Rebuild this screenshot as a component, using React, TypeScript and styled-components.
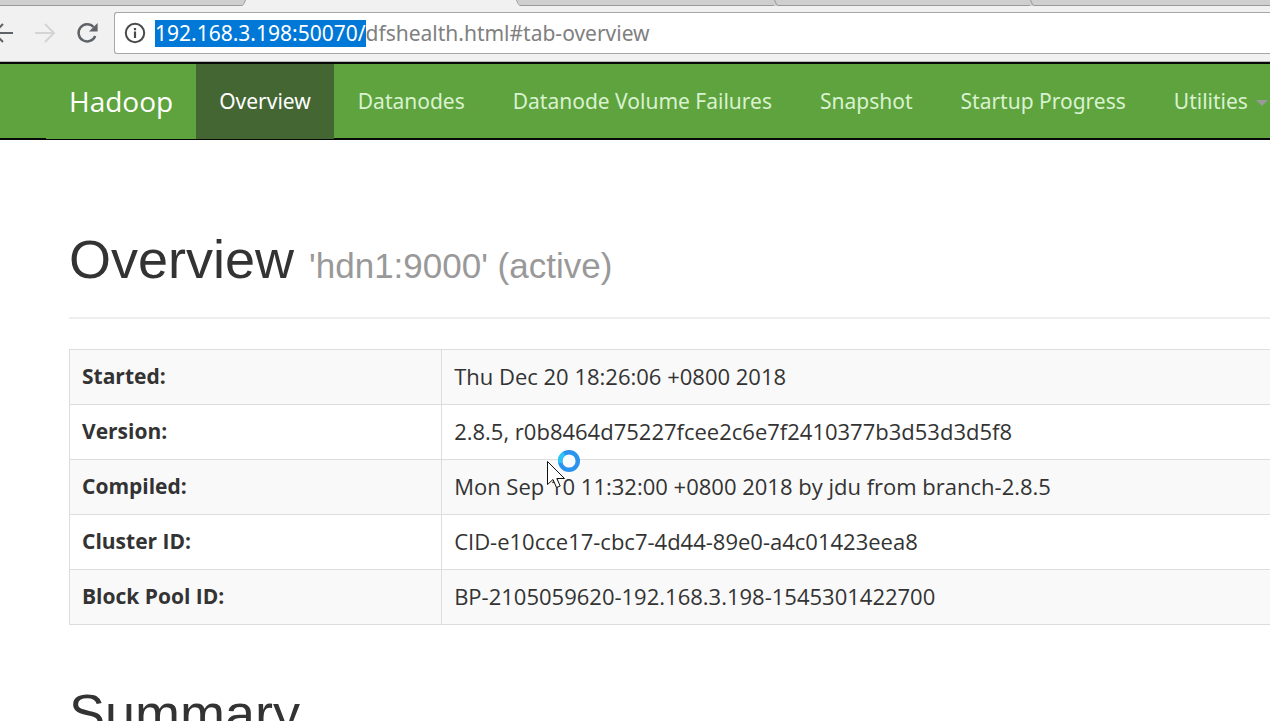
import React, { useEffect, useRef } from "react";
import styled, { createGlobalStyle } from "styled-components";

const uiFont = `"Open Sans", "Noto Sans", sans-serif`;
const navFont = `"Noto Sans", "Open Sans", sans-serif`;
const headingFont = `"Liberation Sans", Arial, sans-serif`;

const GlobalStyle = createGlobalStyle`
  *, *::before, *::after { box-sizing: border-box; }
  html { overflow: hidden; }
  body {
    margin: 0;
    background: #fff;
    color: #333;
    font-family: ${uiFont};
    font-size: 22px;
  }
`;

const Page = styled.div`
  position: relative;
  height: 100vh;
  overflow: hidden;
`;

const BrowserChrome = styled.header`
  background: #f1f1f1;
  border-bottom: 1px solid #b5b5b5;
`;

const TabStrip = styled.div`
  display: flex;
  height: 6px;
`;

const Tab = styled.div<{ $grow: number; $active?: boolean }>`
  flex: ${(p) => p.$grow} 1 0;
  background: ${(p) => (p.$active ? "#f1f1f1" : "#cfcfcf")};
  border-bottom: ${(p) => (p.$active ? "0" : "1px solid #999")};
`;

const TabEdge = styled.svg`
  flex: none;
  width: 5px;
  height: 6px;
`;

const Toolbar = styled.div`
  display: flex;
  align-items: center;
  padding: 6px 0 7px;
`;

const ToolButton = styled.button<{ $width: number }>`
  flex: none;
  width: ${(p) => p.$width}px;
  height: 42px;
  padding: 0;
  border: 0;
  background: none;
  display: flex;
  align-items: center;
`;

const AddressBar = styled.div`
  flex: 1;
  display: flex;
  align-items: center;
  gap: 9px;
  height: 42px;
  padding-left: 9px;
  background: #fff;
  border: 1px solid #a6a6a6;
  border-right: 0;
  border-radius: 3px 0 0 3px;
`;

const AddressInput = styled.input`
  flex: 1;
  min-width: 0;
  padding: 0;
  border: 0;
  outline: 0;
  background: none;
  color: #808080;
  font: 21px/27px ${navFont};

  &::selection {
    background: #0078d7;
    color: #fff;
  }
`;

const Navbar = styled.nav`
  display: flex;
  height: 78px;
  padding-left: 46px;
  background: #5fa33e;
  border: solid #080808;
  border-width: 2px 0;
`;

const Brand = styled.a`
  flex: none;
  height: 75px;
  padding: 0 23px;
  background: #5fa33e;
  color: #fff;
  font-size: 28px;
  line-height: 74px;
  text-decoration: none;
`;

const NavList = styled.ul`
  display: flex;
  margin: 0;
  padding: 0;
  list-style: none;
`;

const NavLink = styled.a<{ $active?: boolean }>`
  display: flex;
  gap: 8px;
  height: ${(p) => (p.$active ? 75 : 74)}px;
  padding: 0 ${(p) => (p.$active ? 23 : 24)}px;
  background: ${(p) => (p.$active ? "#446633" : "transparent")};
  color: ${(p) => (p.$active ? "#fff" : "#d9f2d0")};
  font-family: ${navFont};
  font-size: 21px;
  line-height: 74px;
  white-space: nowrap;
  text-decoration: none;
`;

const Caret = styled.span`
  align-self: center;
  margin-top: 4px;
  border: solid transparent;
  border-width: 6px 6px 0;
  border-top-color: #999;
`;

const Content = styled.main`
  padding: 89px 0 0 69px;
`;

const PageHeader = styled.div`
  padding-bottom: 21px;
  margin-bottom: 30px;
  border-bottom: 2px solid #eee;
`;

const Heading = styled.h1`
  margin: 0;
  font: 54px/60px ${headingFont};

  small {
    color: #999;
    font-size: 35px;
  }
`;

const InfoTable = styled.table`
  width: 100%;
  margin-bottom: 58px;
  border-collapse: collapse;
  border: 1px solid #ddd;
  border-right: 0;
  line-height: 30px;
  text-align: left;

  tr:nth-child(odd) {
    background: #f9f9f9;
  }

  th, td {
    padding: 11px 12px 13px;
    border: 1px solid #ddd;
  }

  td {
    border-right: 0;
  }

  th {
    width: 31%;
    font-size: 21px;
    font-weight: 700;
  }
`;

const BusyPointer = styled.svg`
  position: absolute;
  left: 545px;
  top: 448px;
  pointer-events: none;
`;

const navItems = [
  { label: "Overview", active: true },
  { label: "Datanodes" },
  { label: "Datanode Volume Failures" },
  { label: "Snapshot" },
  { label: "Startup Progress" },
  { label: "Utilities", menu: true },
];

const rows = [
  ["Started:", "Thu Dec 20 18:26:06 +0800 2018"],
  ["Version:", "2.8.5, r0b8464d75227fcee2c6e7f2410377b3d53d3d5f8"],
  ["Compiled:", "Mon Sep 10 11:32:00 +0800 2018 by jdu from branch-2.8.5"],
  ["Cluster ID:", "CID-e10cce17-cbc7-4d44-89e0-a4c01423eea8"],
  ["Block Pool ID:", "BP-2105059620-192.168.3.198-1545301422700"],
];

const host = "192.168.3.198:50070/";

function Edge({ left, right, rising }: { left: string; right: string; rising?: boolean }) {
  return (
    <TabEdge viewBox="0 0 5 6" aria-hidden="true">
      <rect width="5" height="6" fill={right} />
      <path d={rising ? "M0 0H4L1 6H0Z" : "M0 0H1L4 6H0Z"} fill={left} />
      <path
        d={rising ? "M4.5 0L2.5 4.5Q2 5.5 0 5.5" : "M0.5 0L2.5 4.5Q3 5.5 5 5.5"}
        fill="none"
        stroke="#999"
      />
    </TabEdge>
  );
}

export default function App() {
  const address = useRef<HTMLInputElement>(null);

  useEffect(() => {
    address.current?.focus();
    address.current?.setSelectionRange(0, host.length);
  }, []);

  return (
    <Page>
      <GlobalStyle />
      <BrowserChrome>
        <TabStrip>
          <Tab $grow={241} />
          <Edge left="#cfcfcf" right="#f1f1f1" rising />
          <Tab $grow={270} $active />
          <Edge left="#f1f1f1" right="#cfcfcf" />
          <Tab $grow={253} />
          <Edge left="#cfcfcf" right="#cfcfcf" />
          <Tab $grow={251} />
          <Edge left="#cfcfcf" right="#cfcfcf" />
          <Tab $grow={235} />
        </TabStrip>
        <Toolbar>
          <ToolButton $width={35} aria-label="Back">
            <svg width="13" height="22" fill="none" stroke="#5f6368" strokeWidth="2">
              <path d="M13 11H-6M3 2L-6 11L3 20" />
            </svg>
          </ToolButton>
          <ToolButton $width={41} aria-label="Forward">
            <svg width="21" height="22" fill="none" stroke="#d2d4d5" strokeWidth="2">
              <path d="M0 11H18M10 2L19 11L10 20" />
            </svg>
          </ToolButton>
          <ToolButton $width={38} aria-label="Reload">
            <svg width="23" height="22" fill="none" stroke="#5f6368" strokeWidth="2.4">
              <path d="M17.5 5A8.6 8.6 0 1 0 19.2 14" />
              <path d="M21.6 1V9.6H13Z" fill="#5f6368" stroke="none" />
            </svg>
          </ToolButton>
          <AddressBar>
            <svg width="22" height="22" fill="none" stroke="#4a4a4a" strokeWidth="2">
              <circle cx="11" cy="11" r="9.2" />
              <path d="M11 9.5V16M11 6V8.2" strokeWidth="2.2" />
            </svg>
            <AddressInput
              ref={address}
              aria-label="Address"
              spellCheck={false}
              defaultValue={host + "dfshealth.html#tab-overview"}
            />
          </AddressBar>
        </Toolbar>
      </BrowserChrome>

      <Navbar>
        <Brand href="#">Hadoop</Brand>
        <NavList>
          {navItems.map((item) => (
            <li key={item.label}>
              <NavLink href="#" $active={item.active}>
                {item.label}
                {item.menu && <Caret />}
              </NavLink>
            </li>
          ))}
        </NavList>
      </Navbar>

      <Content>
        <PageHeader>
          <Heading>
            Overview <small>'hdn1:9000' (active)</small>
          </Heading>
        </PageHeader>
        <InfoTable>
          <tbody>
            {rows.map(([label, value]) => (
              <tr key={label}>
                <th scope="row">{label}</th>
                <td>{value}</td>
              </tr>
            ))}
          </tbody>
        </InfoTable>
        <Heading>Summary</Heading>
      </Content>

      <BusyPointer width="40" height="44" aria-hidden="true">
        <circle cx="24" cy="13" r="8.8" fill="#f9fbfd" stroke="#2b93ee" strokeWidth="4.4" />
        <path d="M15.4 15A8.8 8.8 0 0 1 19.2 5.6" fill="none" stroke="#2fc4f7" strokeWidth="4.4" />
        <path
          d="M2.5 13.5V36.5L8 31.5L11.5 39.5L15.2 38L11.8 30.5H19.5Z"
          fill="#fff"
          stroke="#111"
        />
      </BusyPointer>
    </Page>
  );
}
